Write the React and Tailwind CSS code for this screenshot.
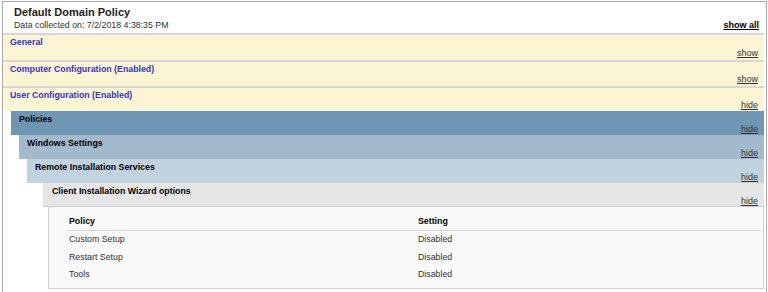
const sections = [
  { title: "General", action: "show", h: "h-[27px]" },
  { title: "Computer Configuration (Enabled)", action: "show", h: "h-[26px]" },
  { title: "User Configuration (Enabled)", action: "hide", h: "h-[25px]" },
];

const bands = [
  { title: "Policies", indent: "ml-[8px]", bg: "bg-[#6f96b3]" },
  { title: "Windows Settings", indent: "ml-[16px]", bg: "bg-[#a3bacd]" },
  { title: "Remote Installation Services", indent: "ml-[24px]", bg: "bg-[#c1d3df]" },
];

const rows = [
  { policy: "Custom Setup", setting: "Disabled" },
  { policy: "Restart Setup", setting: "Disabled" },
  { policy: "Tools", setting: "Disabled" },
];

const Action = ({ label }) => (
  <div className="self-end pr-[6px] text-[9px] leading-[9px] text-[#333] underline">{label}</div>
);

const App = () => {
  return (
    <div
      className="w-[768px] h-[292px] overflow-hidden bg-white"
      style={{ fontFamily: '"Liberation Sans", Arial, sans-serif' }}
    >
      <div className="ml-[2px] mr-[1px] mt-[1px] h-[300px] border border-[#a9a9a9] bg-white">
        <div className="flex h-[31px] items-end justify-between pl-[11px] pr-[7px] pb-[2px]">
          <div className="flex flex-col">
            <div className="text-[11px] font-bold leading-[15px] text-[#222]">Default Domain Policy</div>
            <div className="text-[8.8px] leading-[11px] text-[#333]">Data collected on: 7/2/2018 4:38:35 PM</div>
          </div>
          <div className="pb-[1px] text-[9px] font-bold leading-[10px] text-black underline">show all</div>
        </div>

        <div className="mr-[2px]">
          {sections.map(s => (
            <div key={s.title} className={`flex ${s.h} flex-col justify-between border-t-2 border-[#d6d6d6] bg-[#fcf5d4] pb-[2px]`}>
              <div className="pl-[7px] pt-[2px] text-[8.8px] font-bold leading-[11px] text-[#3434c8]">{s.title}</div>
              <Action label={s.action} />
            </div>
          ))}

          {bands.map(b => (
            <div key={b.title} className={`flex h-[24px] flex-col justify-between ${b.indent} ${b.bg} pb-[1px]`}>
              <div className="pl-[8px] pt-[3px] text-[8.8px] font-bold leading-[11px] text-black">{b.title}</div>
              <Action label="hide" />
            </div>
          ))}

          <div className="ml-[40px] flex h-[24px] flex-col justify-between border-b border-[#cfcfcf] bg-[#e6e6e6] pb-[1px]">
            <div className="pl-[9px] pt-[3px] text-[8.8px] font-bold leading-[11px] text-black">Client Installation Wizard options</div>
            <Action label="hide" />
          </div>

          <div className="ml-[45px] h-[82px] border border-t-0 border-[#cfcfcf] bg-[#f9f9f9] pl-[18px] pr-[2px] pt-[9px]">
            <div className="flex h-[15px] border-b border-[#d4d4d4] text-[8.8px] font-bold leading-[11px] text-black">
              <div className="w-[351px] pl-[2px]">Policy</div>
              <div>Setting</div>
            </div>
            {rows.map(r => (
              <div key={r.policy} className="flex h-[17.5px] items-center text-[8.8px] text-[#333]">
                <div className="w-[351px] pl-[2px]">{r.policy}</div>
                <div>{r.setting}</div>
              </div>
            ))}
          </div>
        </div>
      </div>
    </div>
  );
};

export default App;
